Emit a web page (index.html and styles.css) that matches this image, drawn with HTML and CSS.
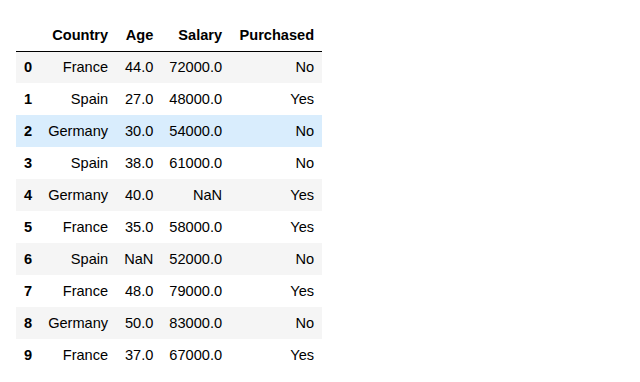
FILE: index.html
```html
<!DOCTYPE html>
<html>
<head>
<meta charset="utf-8">
<link rel="stylesheet" href="styles.css">
</head>
<body>
<div class="output">
<table class="dataframe">
  <thead>
    <tr><th></th><th>Country</th><th>Age</th><th>Salary</th><th class="last">Purchased</th></tr>
  </thead>
  <tbody>
    <tr><th>0</th><td>France</td><td>44.0</td><td>72000.0</td><td>No</td></tr>
    <tr><th>1</th><td>Spain</td><td>27.0</td><td>48000.0</td><td>Yes</td></tr>
    <tr class="hover"><th>2</th><td>Germany</td><td>30.0</td><td>54000.0</td><td>No</td></tr>
    <tr><th>3</th><td>Spain</td><td>38.0</td><td>61000.0</td><td>No</td></tr>
    <tr><th>4</th><td>Germany</td><td>40.0</td><td>NaN</td><td>Yes</td></tr>
    <tr><th>5</th><td>France</td><td>35.0</td><td>58000.0</td><td>Yes</td></tr>
    <tr><th>6</th><td>Spain</td><td>NaN</td><td>52000.0</td><td>No</td></tr>
    <tr><th>7</th><td>France</td><td>48.0</td><td>79000.0</td><td>Yes</td></tr>
    <tr><th>8</th><td>Germany</td><td>50.0</td><td>83000.0</td><td>No</td></tr>
    <tr><th>9</th><td>France</td><td>37.0</td><td>67000.0</td><td>Yes</td></tr>
  </tbody>
</table>
</div>
</body>
</html>
```
FILE: styles.css
```css
body {
  margin: 8px;
  background: #fff;
  font-family: "Liberation Sans", Arial, sans-serif;
  color: #000;
}
.output {
  padding: 11px 0 0 8px;
}
.dataframe {
  border: none;
  border-collapse: collapse;
  border-spacing: 0;
  font-size: 14.6px;
  color: #000;
}
.dataframe thead {
  border-bottom: 1px solid #000;
}
.dataframe th,
.dataframe td {
  height: 32px;
  padding: 0 8px;
  text-align: right;
  vertical-align: middle;
  line-height: normal;
  white-space: nowrap;
  box-sizing: border-box;
}
.dataframe th {
  font-weight: bold;
}
.dataframe th.last {
  width: 92px;
}
.dataframe tbody th {
  text-align: left;
}
.dataframe tbody tr:nth-child(odd) {
  background: #f5f5f5;
}
.dataframe tbody tr.hover {
  background: #d9edfd;
}
```
